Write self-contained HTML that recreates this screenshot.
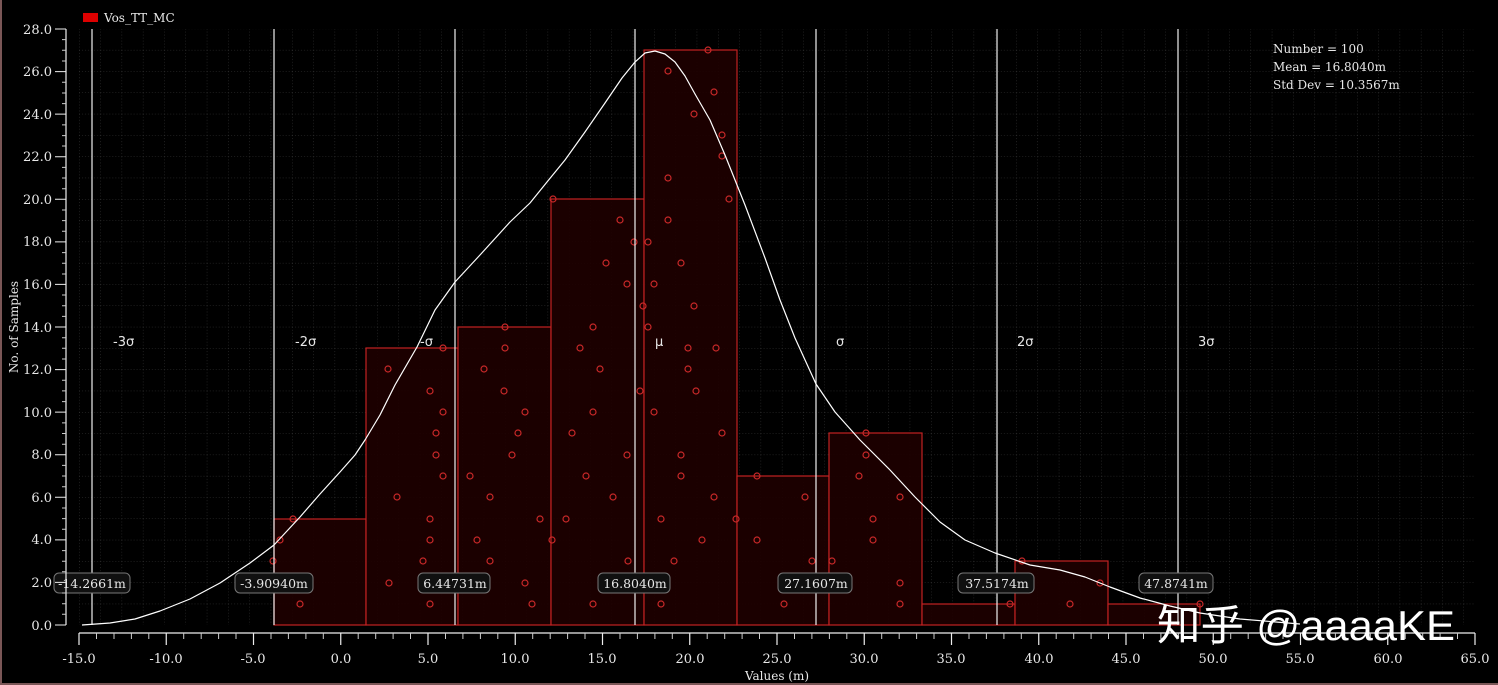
<!DOCTYPE html>
<html><head><meta charset="utf-8"><style>
html,body{margin:0;padding:0;background:#000;}
body{width:1498px;height:685px;overflow:hidden;position:relative;}
svg{position:absolute;left:0;top:0;}
text{font-family:"DejaVu Serif","Liberation Serif",serif;fill:#e8e8e8;}
</style></head><body>
<svg width="1498" height="685" viewBox="0 0 1498 685">
<defs>
<pattern id="g" x="79" y="625" width="21.3" height="21.3" patternUnits="userSpaceOnUse">
<path d="M0 0V21.3M0 0H21.3" stroke="#3a3a3a" stroke-width="1" stroke-dasharray="1 2" fill="none"/>
</pattern>
</defs>
<rect x="0" y="0" width="1498" height="685" fill="#000"/>
<rect x="0" y="0" width="2" height="685" fill="#7a5656"/>
<rect x="0" y="683" width="1498" height="2" fill="#7a5656"/>
<rect x="79" y="29" width="1396" height="596" fill="url(#g)"/>
<g fill="#1e0000" fill-opacity="0.9" stroke="#c22222" stroke-width="1.2">
<rect x="274" y="519" width="92" height="106"/>
<rect x="366" y="348" width="92" height="277"/>
<rect x="458" y="327" width="93" height="298"/>
<rect x="551" y="199" width="93" height="426"/>
<rect x="644" y="50" width="93" height="575"/>
<rect x="737" y="476" width="92" height="149"/>
<rect x="829" y="433" width="93" height="192"/>
<rect x="922" y="604" width="93" height="21"/>
<rect x="1015" y="561" width="93" height="64"/>
<rect x="1108" y="604" width="92" height="21"/>
</g>
<g fill="none" stroke="#c82828" stroke-width="1.2">
<circle cx="273" cy="561" r="3"/><circle cx="280" cy="540" r="3"/><circle cx="293" cy="519" r="3"/><circle cx="300" cy="604" r="3"/><circle cx="389" cy="583" r="3"/>
<circle cx="388" cy="369" r="3"/><circle cx="397" cy="497" r="3"/><circle cx="423" cy="561" r="3"/><circle cx="430" cy="604" r="3"/><circle cx="430" cy="519" r="3"/><circle cx="430" cy="391" r="3"/><circle cx="436" cy="433" r="3"/><circle cx="443" cy="412" r="3"/><circle cx="430" cy="540" r="3"/><circle cx="436" cy="455" r="3"/><circle cx="443" cy="476" r="3"/><circle cx="430" cy="583" r="3"/><circle cx="443" cy="348" r="3"/>
<circle cx="470" cy="476" r="3"/><circle cx="477" cy="540" r="3"/><circle cx="484" cy="369" r="3"/><circle cx="490" cy="561" r="3"/><circle cx="490" cy="497" r="3"/><circle cx="504" cy="391" r="3"/><circle cx="505" cy="327" r="3"/><circle cx="505" cy="348" r="3"/><circle cx="512" cy="455" r="3"/><circle cx="518" cy="433" r="3"/><circle cx="525" cy="412" r="3"/><circle cx="525" cy="583" r="3"/><circle cx="532" cy="604" r="3"/><circle cx="540" cy="519" r="3"/>
<circle cx="553" cy="199" r="3"/><circle cx="552" cy="540" r="3"/><circle cx="566" cy="519" r="3"/><circle cx="572" cy="433" r="3"/><circle cx="580" cy="348" r="3"/><circle cx="586" cy="476" r="3"/><circle cx="593" cy="327" r="3"/><circle cx="593" cy="412" r="3"/><circle cx="593" cy="604" r="3"/><circle cx="600" cy="369" r="3"/><circle cx="606" cy="263" r="3"/><circle cx="613" cy="497" r="3"/><circle cx="620" cy="220" r="3"/><circle cx="627" cy="284" r="3"/><circle cx="627" cy="455" r="3"/><circle cx="628" cy="561" r="3"/><circle cx="634" cy="242" r="3"/><circle cx="640" cy="391" r="3"/><circle cx="643" cy="306" r="3"/><circle cx="633" cy="583" r="3"/>
<circle cx="648" cy="242" r="3"/><circle cx="648" cy="327" r="3"/><circle cx="654" cy="284" r="3"/><circle cx="654" cy="412" r="3"/><circle cx="661" cy="519" r="3"/><circle cx="661" cy="604" r="3"/><circle cx="668" cy="71" r="3"/><circle cx="668" cy="178" r="3"/><circle cx="668" cy="220" r="3"/><circle cx="674" cy="561" r="3"/><circle cx="681" cy="263" r="3"/><circle cx="681" cy="455" r="3"/><circle cx="681" cy="476" r="3"/><circle cx="688" cy="348" r="3"/><circle cx="688" cy="369" r="3"/><circle cx="694" cy="114" r="3"/><circle cx="694" cy="306" r="3"/><circle cx="696" cy="391" r="3"/><circle cx="702" cy="540" r="3"/><circle cx="708" cy="50" r="3"/><circle cx="714" cy="92" r="3"/><circle cx="714" cy="497" r="3"/><circle cx="716" cy="348" r="3"/><circle cx="722" cy="135" r="3"/><circle cx="722" cy="433" r="3"/><circle cx="722" cy="156" r="3"/><circle cx="729" cy="199" r="3"/><circle cx="736" cy="519" r="3"/>
<circle cx="757" cy="476" r="3"/><circle cx="757" cy="540" r="3"/><circle cx="784" cy="604" r="3"/><circle cx="805" cy="497" r="3"/><circle cx="812" cy="561" r="3"/><circle cx="825" cy="583" r="3"/>
<circle cx="832" cy="561" r="3"/><circle cx="859" cy="476" r="3"/><circle cx="866" cy="433" r="3"/><circle cx="866" cy="455" r="3"/><circle cx="873" cy="519" r="3"/><circle cx="873" cy="540" r="3"/><circle cx="900" cy="497" r="3"/><circle cx="900" cy="583" r="3"/><circle cx="900" cy="604" r="3"/>
<circle cx="1010" cy="604" r="3"/><circle cx="1022" cy="561" r="3"/><circle cx="1070" cy="604" r="3"/><circle cx="1100" cy="583" r="3"/><circle cx="1200" cy="604" r="3"/>
</g>
<g stroke="#f0f0f0" stroke-width="1.2">
<line x1="92" y1="29" x2="92" y2="625"/><line x1="274" y1="29" x2="274" y2="625"/><line x1="455" y1="29" x2="455" y2="625"/><line x1="635" y1="29" x2="635" y2="625"/><line x1="816" y1="29" x2="816" y2="625"/><line x1="997" y1="29" x2="997" y2="625"/><line x1="1178" y1="29" x2="1178" y2="625"/>
</g>
<g font-size="13">
<text x="113" y="346" style="font-family:'DejaVu Sans',sans-serif">-3σ</text>
<text x="295" y="346" style="font-family:'DejaVu Sans',sans-serif">-2σ</text>
<text x="420" y="346" style="font-family:'DejaVu Sans',sans-serif">-σ</text>
<text x="655" y="346" style="font-family:'DejaVu Sans',sans-serif">μ</text>
<text x="836" y="346" style="font-family:'DejaVu Sans',sans-serif">σ</text>
<text x="1017" y="346" style="font-family:'DejaVu Sans',sans-serif">2σ</text>
<text x="1198" y="346" style="font-family:'DejaVu Sans',sans-serif">3σ</text>
</g>
<polyline fill="none" stroke="#fff" stroke-width="1.2" stroke-linejoin="round" points="82,625 110,623 135,619 160,611 190,599 220,583 250,563 274,545 300,517 320,494 340,472 355,455 365,440 380,415 395,385 417,347 435,310 455,282 480,255 510,222 530,203 547,182 565,160 585,132 605,103 622,78 635,62 645,53 655,51 665,54 675,62 685,76 695,94 710,120 725,155 745,205 765,258 780,300 795,338 816,384 835,412 860,440 890,470 915,497 940,522 965,540 995,553 1030,565 1060,570 1085,577 1110,587 1140,598 1170,606 1200,613 1240,619 1300,624"/>
<g fill="#101010" stroke="#777" stroke-width="1">
<rect x="54" y="573" width="76" height="20" rx="5"/><rect x="235" y="573" width="78" height="20" rx="5"/><rect x="418" y="573" width="72" height="20" rx="5"/><rect x="598" y="573" width="72" height="20" rx="5"/><rect x="778" y="573" width="74" height="20" rx="5"/><rect x="958" y="573" width="76" height="20" rx="5"/><rect x="1139" y="573" width="74" height="20" rx="5"/>
</g>
<g font-size="12.5" text-anchor="middle">
<text x="92" y="588">-14.2661m</text><text x="274" y="588">-3.90940m</text><text x="455" y="588">6.44731m</text><text x="635" y="588">16.8040m</text><text x="816" y="588">27.1607m</text><text x="997" y="588">37.5174m</text><text x="1176" y="588">47.8741m</text>
</g>
<rect x="83" y="13" width="15" height="9" fill="#d00"/>
<text x="104" y="22" font-size="12">Vos_TT_MC</text>
<g font-size="12"><text x="1273" y="53">Number = 100</text><text x="1273" y="71">Mean = 16.8040m</text><text x="1273" y="89">Std Dev = 10.3567m</text></g>
<line x1="66" y1="29" x2="66" y2="625" stroke="#eee" stroke-width="1.2"/>
<path d="M55 29H66M55 71.6H66M55 114.1H66M55 156.7H66M55 199.3H66M55 241.9H66M55 284.4H66M55 327H66M55 369.6H66M55 412.1H66M55 454.7H66M55 497.3H66M55 539.9H66M55 582.4H66M55 625H66" stroke="#eee" stroke-width="1"/>
<path d="M62 39.6H66M62 50.3H66M62 61H66M62 82.3H66M62 93H66M62 103.6H66M62 124.9H66M62 135.6H66M62 146H66M62 167.4H66M62 178H66M62 188.7H66M62 210H66M62 220.6H66M62 231.3H66M62 252.6H66M62 263.3H66M62 274H66M62 295H66M62 305.7H66M62 316.4H66M62 337.7H66M62 348.3H66M62 359H66M62 380.3H66M62 390.9H66M62 401.6H66M62 422.9H66M62 433.5H66M62 444.2H66M62 465.4H66M62 476H66M62 486.7H66M62 508H66M62 518.6H66M62 529.3H66M62 550.6H66M62 561.2H66M62 571.8H66M62 593H66M62 603.7H66M62 614.3H66" stroke="#ccc" stroke-width="1"/>
<g font-size="13" text-anchor="end">
<text x="52" y="34">28.0</text><text x="52" y="76">26.0</text><text x="52" y="119">24.0</text><text x="52" y="161">22.0</text><text x="52" y="204">20.0</text><text x="52" y="246">18.0</text><text x="52" y="289">16.0</text><text x="52" y="332">14.0</text><text x="52" y="374">12.0</text><text x="52" y="417">10.0</text><text x="52" y="459">8.0</text><text x="52" y="502">6.0</text><text x="52" y="544">4.0</text><text x="52" y="587">2.0</text><text x="52" y="630">0.0</text>
</g>
<text transform="translate(18,327) rotate(-90)" font-size="12" text-anchor="middle">No. of Samples</text>
<line x1="79" y1="633" x2="1475" y2="633" stroke="#eee" stroke-width="1.2"/>
<path d="M79 633v12M166.25 633v12M253.5 633v12M340.75 633v12M428 633v12M515.25 633v12M602.5 633v12M689.75 633v12M777 633v12M864.25 633v12M951.5 633v12M1038.75 633v12M1126 633v12M1213.25 633v12M1300.5 633v12M1387.75 633v12M1475 633v12" stroke="#eee" stroke-width="1.2"/>
<path d="M96.5 633v6M114 633v6M131.4 633v6M148.8 633v6M183.7 633v6M201.2 633v6M218.6 633v6M236 633v6M271 633v6M288.4 633v6M305.9 633v6M323.3 633v6M358.2 633v6M375.7 633v6M393.1 633v6M410.5 633v6M445.5 633v6M462.9 633v6M480.4 633v6M497.8 633v6M532.7 633v6M550.2 633v6M567.6 633v6M585 633v6M620 633v6M637.4 633v6M654.9 633v6M672.3 633v6M707.2 633v6M724.7 633v6M742.1 633v6M759.5 633v6M794.5 633v6M811.9 633v6M829.4 633v6M846.8 633v6M881.7 633v6M899.2 633v6M916.6 633v6M934 633v6M969 633v6M986.4 633v6M1003.9 633v6M1021.3 633v6M1056.2 633v6M1073.7 633v6M1091.1 633v6M1108.5 633v6M1143.5 633v6M1160.9 633v6M1178.4 633v6M1195.8 633v6M1230.7 633v6M1248.2 633v6M1265.6 633v6M1283 633v6M1318 633v6M1335.4 633v6M1352.9 633v6M1370.3 633v6M1405.2 633v6M1422.7 633v6M1440.1 633v6M1457.5 633v6" stroke="#ccc" stroke-width="1"/>
<g font-size="13" text-anchor="middle">
<text x="79" y="663">-15.0</text><text x="166" y="663">-10.0</text><text x="253" y="663">-5.0</text><text x="341" y="663">0.0</text><text x="428" y="663">5.0</text><text x="515" y="663">10.0</text><text x="602" y="663">15.0</text><text x="690" y="663">20.0</text><text x="777" y="663">25.0</text><text x="864" y="663">30.0</text><text x="951" y="663">35.0</text><text x="1039" y="663">40.0</text><text x="1126" y="663">45.0</text><text x="1213" y="663">50.0</text><text x="1300" y="663">55.0</text><text x="1388" y="663">60.0</text><text x="1475" y="663">65.0</text>
</g>
<text x="777" y="680" font-size="12" text-anchor="middle">Values (m)</text>
<text x="1157" y="640" font-size="42" textLength="298" lengthAdjust="spacingAndGlyphs" style="font-family:'Liberation Sans','Noto Sans CJK SC',sans-serif;fill:#fff">知乎 @aaaaKE</text>
</svg>
</body></html>
